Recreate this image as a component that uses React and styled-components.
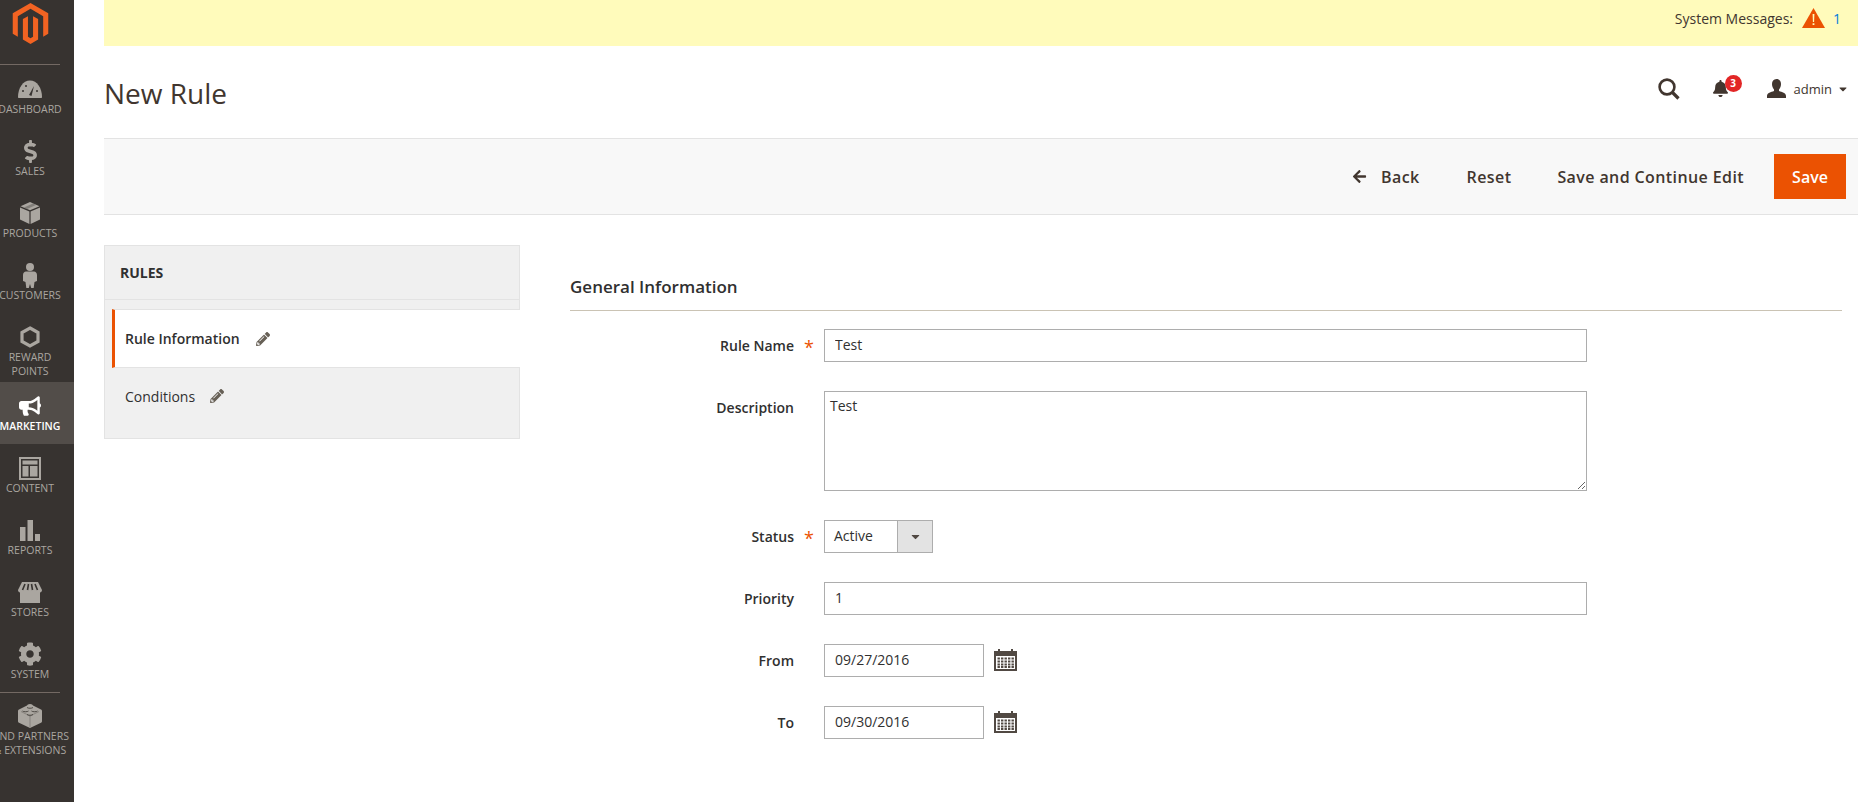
import React from "react";
import styled, { createGlobalStyle } from "styled-components";
import {
  FaDollarSign,
  FaBullhorn,
  FaCog,
  FaPencilAlt,
  FaBell,
  FaArrowLeft,
  FaCaretDown,
} from "react-icons/fa";
import { SiMagento } from "react-icons/si";

const GlobalStyle = createGlobalStyle`
  html, body {
    margin: 0;
    padding: 0;
    background: #fff;
    font-family: "Open Sans", "Liberation Sans", sans-serif;
    color: #303030;
  }
  * { box-sizing: border-box; }
`;

const Page = styled.div`
  display: flex;
  width: 1858px;
  height: 802px;
  overflow: hidden;
`;

const Sidebar = styled.nav`
  flex: 0 0 74px;
  background: #373330;
  overflow: hidden;
  display: flex;
  flex-direction: column;
`;

const LogoBox = styled.div`
  height: 65px;
  width: 60px;
  padding-top: 3px;
  display: flex;
  justify-content: center;
  color: #f26322;
  font-size: 41px;
  border-bottom: 1px solid #736963;
`;

const NavItem = styled.div`
  width: 74px;
  flex: 0 0 ${(p) => p.$height || 62}px;
  padding: ${(p) => p.$top ?? 10}px 14px 0 0;
  display: flex;
  flex-direction: column;
  align-items: center;
  color: ${(p) => (p.$active ? "#fff" : "#aaa6a0")};
  background: ${(p) => (p.$active ? "#524d49" : "transparent")};
`;

const NavIcon = styled.div`
  height: 28px;
  flex: 0 0 28px;
  display: flex;
  align-items: center;
  justify-content: center;
`;

const NavLabel = styled.div`
  margin-top: -1px;
  font-size: 10.5px;
  line-height: 14px;
  font-weight: ${(p) => (p.$active ? 600 : 400)};
  text-transform: uppercase;
  text-align: center;
  white-space: nowrap;
`;

const NavDivider = styled.div`
  width: 60px;
  height: 1px;
  flex: 0 0 1px;
  background: #736963;
`;

const Main = styled.div`
  flex: 1;
  margin-left: 30px;
  display: flex;
  flex-direction: column;
`;

const Notice = styled.div`
  height: 46px;
  flex: 0 0 46px;
  padding: 0 17px 10px 0;
  background: #fffbbb;
  display: flex;
  align-items: center;
  justify-content: flex-end;
  font-size: 14px;
  color: #41362f;
`;

const NoticeText = styled.span`
  margin-right: 9px;
`;

const NoticeCount = styled.span`
  margin-left: 8px;
  color: #007bdb;
`;

const Header = styled.header`
  height: 92px;
  flex: 0 0 92px;
  padding-top: 2px;
  display: flex;
  align-items: center;
  justify-content: space-between;
`;

const Title = styled.h1`
  margin: 0;
  font-size: 28px;
  font-weight: 400;
  color: #41362f;
`;

const Actions = styled.div`
  margin-bottom: 9px;
  display: flex;
  align-items: center;
  color: #41362f;
`;

const BellWrap = styled.div`
  position: relative;
  margin-left: 32px;
  margin-right: 38px;
  display: flex;
  font-size: 17px;
`;

const Badge = styled.span`
  position: absolute;
  top: -5px;
  left: 13px;
  width: 17px;
  height: 17px;
  border-radius: 50%;
  background: #e22626;
  color: #fff;
  font-size: 10px;
  font-weight: 700;
  line-height: 17px;
  text-align: center;
`;

const AdminName = styled.span`
  margin-left: 8px;
  margin-right: 5px;
  font-size: 13px;
`;

const CaretSlot = styled.span`
  display: flex;
  margin-right: 9px;
  font-size: 12px;
`;

const Toolbar = styled.div`
  height: 77px;
  flex: 0 0 77px;
  padding-right: 12px;
  background: #f8f8f8;
  border-top: 1px solid #e3e3e3;
  border-bottom: 1px solid #e3e3e3;
  display: flex;
  align-items: center;
  justify-content: flex-end;
`;

const ToolButton = styled.button`
  margin-right: ${(p) => p.$gap}px;
  padding: 0;
  border: 0;
  background: none;
  display: flex;
  align-items: center;
  gap: 14px;
  font-family: inherit;
  font-size: 16px;
  font-weight: 600;
  letter-spacing: 0.4px;
  color: #41362f;
`;

const SaveButton = styled.button`
  width: 72px;
  height: 45px;
  border: 0;
  background: #eb5202;
  color: #fff;
  font-family: inherit;
  font-size: 16px;
  font-weight: 600;
`;

const Content = styled.div`
  display: flex;
  padding: 30px 16px 0 0;
`;

const TabsPanel = styled.aside`
  flex: 0 0 416px;
  height: 194px;
  background: #f0f0f0;
  border: 1px solid #e3e3e3;
`;

const TabsTitle = styled.div`
  height: 54px;
  padding-left: 15px;
  border-bottom: 1px solid #e3e3e3;
  display: flex;
  align-items: center;
  font-size: 14px;
  font-weight: 700;
  color: #303030;
`;

const Tab = styled.div`
  height: ${(p) => (p.$active ? 59 : 56)}px;
  margin: ${(p) => (p.$active ? "9px -1px 0 7px" : "0 0 0 7px")};
  padding-left: 10px;
  display: flex;
  align-items: center;
  gap: ${(p) => (p.$active ? 16 : 15)}px;
  font-size: 14px;
  font-weight: ${(p) => (p.$active ? 600 : 400)};
  color: #303030;
  background: ${(p) => (p.$active ? "#fff" : "transparent")};
  border-left: 3px solid ${(p) => (p.$active ? "#eb5202" : "transparent")};
  border-top: ${(p) => (p.$active ? "1px solid #e3e3e3" : "0")};
  border-bottom: ${(p) => (p.$active ? "1px solid #e3e3e3" : "0")};
  svg {
    color: #676056;
    font-size: 14px;
  }
`;

const FormArea = styled.section`
  flex: 1;
  margin-left: 50px;
  padding-top: 31px;
`;

const SectionTitle = styled.h2`
  margin: 0 0 18px;
  height: 35px;
  border-bottom: 1px solid #cac3b4;
  font-size: 17px;
  line-height: 22px;
  font-weight: 600;
  color: #303030;
`;

const Row = styled.div`
  display: grid;
  grid-template-columns: 224px 30px 1fr;
  align-items: start;
  margin-bottom: 29px;
`;

const FieldLabel = styled.label`
  font-size: 14px;
  font-weight: 600;
  line-height: 33px;
  text-align: right;
  color: #303030;
`;

const Required = styled.span`
  height: 33px;
  padding-left: 10px;
  font-size: 18px;
  line-height: 37px;
  color: #eb5202;
`;

const TextInput = styled.input`
  display: block;
  width: ${(p) => p.$width || 763}px;
  height: 33px;
  padding: 0 10px 2px;
  border: 1px solid #adadad;
  border-radius: 0;
  font-family: inherit;
  font-size: 14px;
  color: #303030;
  outline: none;
`;

const TextArea = styled.textarea`
  display: block;
  width: 763px;
  height: 100px;
  padding: 4px 5px;
  border: 1px solid #adadad;
  border-radius: 0;
  font-family: inherit;
  font-size: 14px;
  line-height: 20px;
  color: #303030;
  outline: none;
`;

const SelectBox = styled.div`
  width: 109px;
  height: 33px;
  border: 1px solid #adadad;
  display: flex;
  align-items: center;
  font-size: 14px;
`;

const SelectValue = styled.span`
  flex: 1;
  padding: 0 0 2px 9px;
`;

const SelectArrow = styled.span`
  width: 35px;
  height: 100%;
  background: #e3e3e3;
  border-left: 1px solid #adadad;
  display: flex;
  align-items: center;
  justify-content: center;
  color: #514943;
  font-size: 13px;
`;

const DateField = styled.div`
  display: flex;
  align-items: center;
  gap: 10px;
`;

const CalendarSvg = styled.svg`
  width: 23px;
  height: 23px;
  margin-bottom: 2px;
  color: #514943;
`;

const Gauge = () => (
  <svg width="24" height="18" viewBox="0 0 24 18" fill="currentColor">
    <path d="M0 17C0 8 5 .5 12 .5S24 8 24 17c0 .6-.4 1-1 1H1c-.6 0-1-.4-1-1z" />
    <path d="M11 15l5-9-2.500 10z" fill="#373330" />
    <circle cx="5" cy="11" r="1" fill="#373330" />
    <circle cx="8" cy="6" r="1" fill="#373330" />
    <circle cx="19" cy="11" r="1" fill="#373330" />
  </svg>
);

const Box = () => (
  <svg width="20" height="22" viewBox="0 0 20 22" fill="currentColor">
    <path d="M10 0l9.500 4.200-9.500 4.100L.5 4.200z" />
    <path d="M0 5.400l9.400 4.100V22L0 17.600zM20 5.400l-9.400 4.100V22l9.400-4.400z" />
    <path d="M13 1.500l3 1.400-9 4-3-1.400z" fill="#373330" opacity=".35" />
  </svg>
);

const Person = () => (
  <svg width="14" height="25" viewBox="0 0 14 25" fill="currentColor">
    <circle cx="7" cy="4" r="4" />
    <path d="M3 8.500h8c1.500 0 3 1.500 3 3.500v6l-2.500 1-.8 6H8.200L7 21l-1.200 4H3.300l-.8-6L0 18v-6c0-2 1.500-3.500 3-3.500z" />
  </svg>
);

const Hexagon = () => (
  <svg width="20" height="22" viewBox="0 0 20 22" fill="none" stroke="currentColor" strokeWidth="3.2">
    <path d="M10 2l8 4.500v9L10 20l-8-4.500v-9z" />
  </svg>
);

const Layout = () => (
  <svg width="22" height="23" viewBox="0 0 22 23" fill="currentColor">
    <path d="M0 0h22v23H0zm2 2v19h18V2z" />
    <path d="M3.500 3.500h15v4h-15zM3.500 9h6v10.500h-6zM11 9h7.500v10.500H11z" />
  </svg>
);

const Bars = () => (
  <svg width="20" height="21" viewBox="0 0 20 21" fill="currentColor">
    <path d="M0 7h5.500v14H0zM7.500 0H13v21H7.500zM15 14h5v7h-5z" />
  </svg>
);

const Store = () => (
  <svg width="24" height="21" viewBox="0 0 24 21" fill="currentColor">
    <path d="M4 0h16l4 8c0 1.500-1 2.500-2 2.500V21H2V10.500C1 10.500 0 9.500 0 8z" />
    <path d="M7 2L4.500 8M10.500 2L9.500 8M13.500 2l1 6M17 2l2.500 6" stroke="#373330" strokeWidth="1.600" />
  </svg>
);

const Block = () => (
  <svg width="24" height="24" viewBox="0 0 24 24" fill="currentColor">
    <path d="M12 0c2 0 2.500 1 3 1.500L23 5.500c.6.300 1 .8 1 1.500v10c0 1-.5 1.500-1 1.800L12 24 1 18.800C.5 18.500 0 18 0 17V7c0-.7.400-1.200 1-1.500l8-4C9.500 1 10 0 12 0z" />
    <path d="M3 7.500L12 12l9-4.500M12 12v11" fill="none" stroke="#373330" strokeOpacity=".3" strokeWidth="1" />
    <path d="M9 3.500c1 1 5 1 6 0M4.500 7c1 1 5 1 6 0M13.500 7c1 1 5 1 6 0M9 10.500c1 1 5 1 6 0" fill="none" stroke="#373330" strokeWidth=".8" />
  </svg>
);

const Warning = () => (
  <svg width="23" height="20" viewBox="0 0 23 20">
    <path d="M11.500 0L23 20H0z" fill="#eb5202" />
    <path d="M10.600 6h1.800l-.3 8h-1.200zM10.600 15.200h1.800V17h-1.800z" fill="#fffbbb" />
  </svg>
);

const SearchGlyph = () => (
  <svg width="22" height="22" viewBox="0 0 22 22" fill="none" stroke="currentColor">
    <circle cx="9" cy="9" r="7.400" strokeWidth="2.600" />
    <path d="M14.500 14.500l6 6" strokeWidth="3.200" />
  </svg>
);

const UserGlyph = () => (
  <svg width="19" height="19" viewBox="0 0 19 19" fill="currentColor">
    <path d="M9.500 0C12.500 0 14 2.200 14 5c0 2.500-1 4.500-2 5.500V12c3 1 7 2 7 5v2H0v-2c0-3 4-4 7-5v-1.500C6 9.500 5 7.500 5 5c0-2.800 1.500-5 4.500-5z" />
  </svg>
);

const Calendar = () => (
  <CalendarSvg viewBox="0 0 23 23" fill="currentColor">
    <path d="M0 3h4V1h2v2h11V1h2v2h4v20H0zM2 8v13h19V8z" />
    {[9.5, 12.5, 15.5, 18].map((y) =>
      [3.5, 7, 10.5, 14, 17.5].map((x) => (
        <rect key={`${x}-${y}`} x={x} y={y} width="2.400" height="2" />
      ))
    )}
  </CalendarSvg>
);

const navItems = [
  { label: "Dashboard", icon: <Gauge /> },
  { label: "Sales", icon: <FaDollarSign size={23} /> },
  { label: "Products", icon: <Box /> },
  { label: "Customers", icon: <Person /> },
  { label: ["Reward", "Points"], icon: <Hexagon />, height: 69 },
  { label: "Marketing", icon: <FaBullhorn size={22} />, active: true },
  { label: "Content", icon: <Layout /> },
  { label: "Reports", icon: <Bars /> },
  { label: "Stores", icon: <Store /> },
  { label: "System", icon: <FaCog size={24} /> },
];

function NavEntry({ label, icon, active, height, top }) {
  const lines = Array.isArray(label) ? label : [label];
  return (
    <NavItem $active={active} $height={height} $top={top}>
      <NavIcon>{icon}</NavIcon>
      <NavLabel $active={active}>
        {lines.map((line) => (
          <div key={line}>{line}</div>
        ))}
      </NavLabel>
    </NavItem>
  );
}

function FormRow({ label, required, children }) {
  return (
    <Row>
      <FieldLabel>{label}</FieldLabel>
      <Required>{required ? "*" : ""}</Required>
      <div>{children}</div>
    </Row>
  );
}

export default function App() {
  return (
    <Page>
      <GlobalStyle />
      <Sidebar>
        <LogoBox>
          <SiMagento />
        </LogoBox>
        {navItems.map((item) => (
          <NavEntry key={String(item.label)} {...item} />
        ))}
        <NavDivider />
        <NavEntry
          label={["Find Partners", "& Extensions"]}
          icon={<Block />}
          height={90}
          top={9}
        />
      </Sidebar>

      <Main>
        <Notice>
          <NoticeText>System Messages:</NoticeText>
          <Warning />
          <NoticeCount>1</NoticeCount>
        </Notice>

        <Header>
          <Title>New Rule</Title>
          <Actions>
            <SearchGlyph />
            <BellWrap>
              <FaBell />
              <Badge>3</Badge>
            </BellWrap>
            <UserGlyph />
            <AdminName>admin</AdminName>
            <CaretSlot>
              <FaCaretDown />
            </CaretSlot>
          </Actions>
        </Header>

        <Toolbar>
          <ToolButton $gap={47}>
            <FaArrowLeft size={15} />
            Back
          </ToolButton>
          <ToolButton $gap={46}>Reset</ToolButton>
          <ToolButton $gap={30}>Save and Continue Edit</ToolButton>
          <SaveButton>Save</SaveButton>
        </Toolbar>

        <Content>
          <TabsPanel>
            <TabsTitle>RULES</TabsTitle>
            <Tab $active>
              Rule Information
              <FaPencilAlt />
            </Tab>
            <Tab>
              Conditions
              <FaPencilAlt />
            </Tab>
          </TabsPanel>

          <FormArea>
            <SectionTitle>General Information</SectionTitle>
            <FormRow label="Rule Name" required>
              <TextInput defaultValue="Test" />
            </FormRow>
            <FormRow label="Description">
              <TextArea defaultValue="Test" />
            </FormRow>
            <FormRow label="Status" required>
              <SelectBox>
                <SelectValue>Active</SelectValue>
                <SelectArrow>
                  <FaCaretDown />
                </SelectArrow>
              </SelectBox>
            </FormRow>
            <FormRow label="Priority">
              <TextInput defaultValue="1" />
            </FormRow>
            <FormRow label="From">
              <DateField>
                <TextInput $width={160} defaultValue="09/27/2016" />
                <Calendar />
              </DateField>
            </FormRow>
            <FormRow label="To">
              <DateField>
                <TextInput $width={160} defaultValue="09/30/2016" />
                <Calendar />
              </DateField>
            </FormRow>
          </FormArea>
        </Content>
      </Main>
    </Page>
  );
}
